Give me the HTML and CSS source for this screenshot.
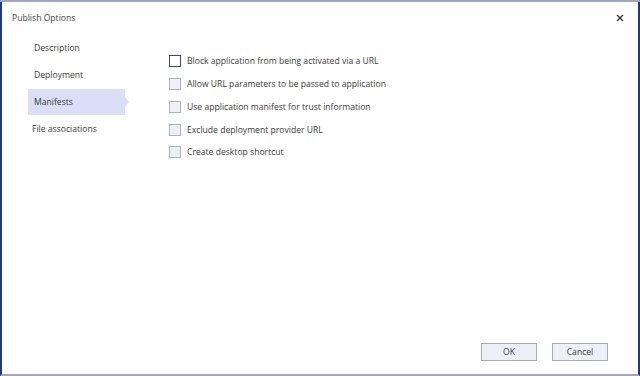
FILE: index.html
```html
<!DOCTYPE html>
<html>
<head>
<link rel="stylesheet" href="styles.css">
</head>
<body>
<div class="dialog">
  <div class="titlebar">
    <span class="title">Publish Options</span>
    <svg class="close" width="8" height="8" viewBox="0 0 8 8">
      <path d="M1 1 L7 7 M7 1 L1 7" stroke="#2b2b2b" stroke-width="1.3" fill="none"/>
    </svg>
  </div>

  <div class="main">
    <ul class="nav">
      <li class="nav-item">Description</li>
      <li class="nav-item">Deployment</li>
      <li class="nav-item active">Manifests</li>
      <li class="nav-item files">File associations</li>
    </ul>

    <div class="options">
      <label class="option"><span class="box focus"></span>Block application from being activated via a URL</label>
      <label class="option"><span class="box"></span>Allow URL parameters to be passed to application</label>
      <label class="option"><span class="box"></span>Use application manifest for trust information</label>
      <label class="option"><span class="box"></span>Exclude deployment provider URL</label>
      <label class="option"><span class="box"></span>Create desktop shortcut</label>
    </div>
  </div>

  <div class="footer">
    <button class="btn">OK</button>
    <button class="btn">Cancel</button>
  </div>
</div>
</body>
</html>
```

FILE: styles.css
```css
html, body {
  margin: 0;
  padding: 0;
}

body {
  width: 640px;
  height: 376px;
  background-color: #9ea6c2;
  font-family: "Open Sans", "Noto Sans", sans-serif;
  font-size: 8.6px;
  color: #3a3a3a;
  overflow: hidden;
}

.dialog {
  box-sizing: border-box;
  margin-top: 2px;
  height: 374px;
  background-color: #fff;
  border-left: 2px solid #1f3b7c;
  border-right: 2px solid #1f3b7c;
  border-bottom: 2px solid #a3a7b5;
  display: flex;
  flex-direction: column;
}

.titlebar {
  box-sizing: border-box;
  height: 30px;
  padding: 2px 14px 0 10px;
  display: flex;
  align-items: center;
  justify-content: space-between;
}

.title {
  color: #444;
}

.main {
  flex: 1;
  display: flex;
  gap: 40px;
}

.nav {
  list-style: none;
  margin: 3px 0 0 0;
  padding: 0 0 0 26px;
  width: 101px;
  display: flex;
  flex-direction: column;
  gap: 1px;
}

.nav-item {
  height: 26px;
  line-height: 26px;
  padding-left: 6px;
  width: 91px;
  position: relative;
}

.nav-item.files {
  padding-left: 4px;
}

.nav-item.active {
  background-color: #dadef6;
}

.nav-item.active::after {
  content: "";
  position: absolute;
  left: 97px;
  top: 8px;
  border-left: 4px solid #dadef6;
  border-top: 5px solid transparent;
  border-bottom: 5px solid transparent;
}

.options {
  margin-top: 18px;
  display: flex;
  flex-direction: column;
}

.option {
  height: 22.75px;
  display: flex;
  align-items: center;
  gap: 6px;
}

.box {
  box-sizing: border-box;
  width: 12px;
  height: 12px;
  border: 1px solid #aab1c9;
  background-color: #eef0f8;
}

.box.focus {
  border-color: #3a4a78;
  background-color: #fff;
}

.footer {
  display: flex;
  justify-content: flex-end;
  gap: 15px;
  padding: 0 30px 13px 0;
}

.btn {
  box-sizing: border-box;
  width: 56px;
  height: 18px;
  padding: 0;
  font-family: "Open Sans", "Noto Sans", sans-serif;
  font-size: 8.6px;
  color: #3a3a3a;
  background-color: #eef0f9;
  border: 1px solid #a3a9be;
  border-radius: 0;
}
```
